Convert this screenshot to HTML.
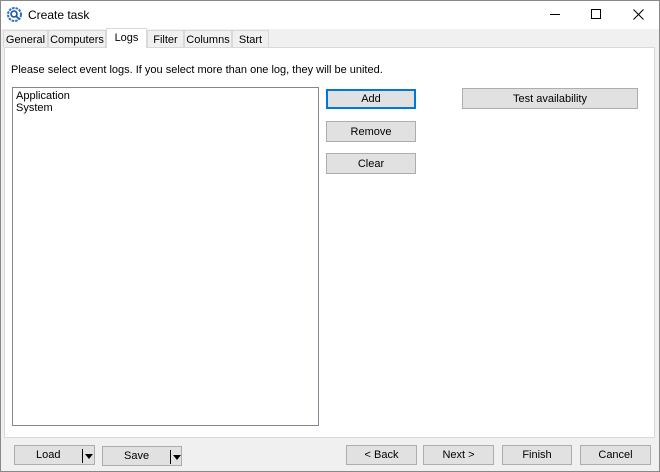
<!DOCTYPE html>
<html><head><style>
*{margin:0;padding:0;box-sizing:border-box}
body{width:660px;height:472px;background:#f0f0f0;font-family:"Liberation Sans",sans-serif;font-size:11px;color:#000;position:relative;overflow:hidden}
.a{position:absolute}
.title{left:0;top:0;width:660px;height:29px;background:#fff}
.tab{position:absolute;top:30px;height:17px;border:1px solid #d9d9d9;border-bottom:none;background:#f0f0f0;text-align:center;line-height:18px}
.btn{position:absolute;background:#e1e1e1;border:1px solid #adadad;text-align:center;line-height:20px}
.sep{position:absolute;top:3px;width:1px;height:14px;background:#000}
.arr{position:absolute;top:8px;width:0;height:0;border-left:4px solid transparent;border-right:4px solid transparent;border-top:5px solid #000}
</style></head><body>
<div class="a" style="left:0;top:0;width:660px;height:472px;border:1px solid #888;z-index:5;pointer-events:none"></div>
<div class="a title"></div>
<svg class="a" style="left:7px;top:7px" width="15" height="15" viewBox="0 0 15 15"><circle cx="7.5" cy="7.5" r="6.5" fill="none" stroke="#2a6fc9" stroke-width="2" stroke-dasharray="2.5 1"/><circle cx="7" cy="7" r="3" fill="none" stroke="#1c4fa0" stroke-width="1.6"/><line x1="9" y1="9" x2="11.5" y2="11.5" stroke="#1c4fa0" stroke-width="1.6"/></svg>
<div class="a" style="left:28px;top:8px;font-size:12px">Create task</div>
<div class="a" style="left:550px;top:14px;width:10px;height:1px;background:#000"></div>
<div class="a" style="left:591px;top:9px;width:10px;height:10px;border:1px solid #000"></div>
<svg class="a" style="left:633px;top:9px" width="11" height="11"><path d="M0.5 0.5L10.5 10.5M10.5 0.5L0.5 10.5" stroke="#000" stroke-width="1"/></svg>
<div class="a" style="left:4px;top:47px;width:651px;height:391px;background:#fff;border:1px solid #d9d9d9"></div>
<div class="tab" style="left:3px;width:45px">General</div>
<div class="tab" style="left:48px;width:58px">Computers</div>
<div class="tab" style="left:106px;width:41px;top:28px;height:20px;background:#fff;line-height:18px;z-index:2">Logs</div>
<div class="tab" style="left:147px;width:37px">Filter</div>
<div class="tab" style="left:184px;width:48px">Columns</div>
<div class="tab" style="left:232px;width:37px">Start</div>
<div class="a" style="left:11px;top:64px">Please select event logs. If you select more than one log, they will be united.</div>
<div class="a" style="left:12px;top:87px;width:307px;height:339px;border:1px solid #828790;background:#fff;padding:2px 0 0 3px;line-height:12px">Application<br>System</div>
<div class="btn" style="left:326px;top:89px;width:90px;height:20px;border:2px solid #0078d7;line-height:17px">Add</div>
<div class="btn" style="left:326px;top:121px;width:90px;height:21px">Remove</div>
<div class="btn" style="left:326px;top:153px;width:90px;height:21px">Clear</div>
<div class="btn" style="left:462px;top:88px;width:176px;height:21px">Test availability</div>
<div class="btn" style="left:14px;top:445px;width:81px;height:20px;text-align:left;padding-left:21px;line-height:19px">Load<div class="sep" style="left:67px"></div><div class="arr" style="left:70px"></div></div>
<div class="btn" style="left:102px;top:446px;width:80px;height:20px;text-align:left;padding-left:21px;line-height:19px">Save<div class="sep" style="left:67px"></div><div class="arr" style="left:70px"></div></div>
<div class="btn" style="left:346px;top:445px;width:71px;height:20px;line-height:19px">&lt; Back</div>
<div class="btn" style="left:423px;top:445px;width:71px;height:20px;line-height:19px">Next &gt;</div>
<div class="btn" style="left:502px;top:445px;width:70px;height:20px;line-height:19px">Finish</div>
<div class="btn" style="left:580px;top:445px;width:71px;height:20px;line-height:19px">Cancel</div>
</body></html>
